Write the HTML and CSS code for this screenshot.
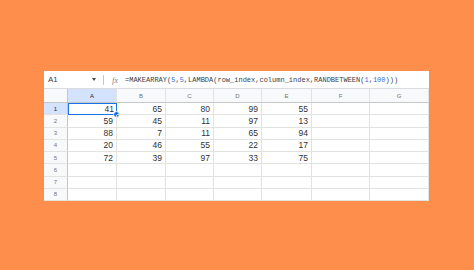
FILE: index.html
```html
<!DOCTYPE html>
<html>
<head>
<meta charset="utf-8">
<link rel="stylesheet" href="styles.css">
</head>
<body>
<div class="sheet">
  <div class="fbar">
    <div class="namebox"><span>A1</span><span class="caret"></span></div>
    <div class="divider"></div>
    <div class="fx">fx</div>
    <div class="formula">=MAKEARRAY(<span class="num">5</span>,<span class="num">5</span>,LAMBDA(row_index,column_index,RANDBETWEEN(<span class="num">1</span>,<span class="num">100</span>)))</div>
  </div>
  <div class="grid">
    <div class="corner"></div>
    <div class="colh sel">A</div><div class="colh">B</div><div class="colh">C</div><div class="colh">D</div><div class="colh">E</div><div class="colh">F</div><div class="colh">G</div>

    <div class="rowh sel">1</div>
    <div class="cell active">41<span class="handle"></span></div><div class="cell">65</div><div class="cell">80</div><div class="cell">99</div><div class="cell">55</div><div class="cell"></div><div class="cell"></div>

    <div class="rowh">2</div>
    <div class="cell">59</div><div class="cell">45</div><div class="cell">11</div><div class="cell">97</div><div class="cell">13</div><div class="cell"></div><div class="cell"></div>

    <div class="rowh">3</div>
    <div class="cell">88</div><div class="cell">7</div><div class="cell">11</div><div class="cell">65</div><div class="cell">94</div><div class="cell"></div><div class="cell"></div>

    <div class="rowh">4</div>
    <div class="cell">20</div><div class="cell">46</div><div class="cell">55</div><div class="cell">22</div><div class="cell">17</div><div class="cell"></div><div class="cell"></div>

    <div class="rowh">5</div>
    <div class="cell">72</div><div class="cell">39</div><div class="cell">97</div><div class="cell">33</div><div class="cell">75</div><div class="cell"></div><div class="cell"></div>

    <div class="rowh">6</div>
    <div class="cell"></div><div class="cell"></div><div class="cell"></div><div class="cell"></div><div class="cell"></div><div class="cell"></div><div class="cell"></div>

    <div class="rowh">7</div>
    <div class="cell"></div><div class="cell"></div><div class="cell"></div><div class="cell"></div><div class="cell"></div><div class="cell"></div><div class="cell"></div>

    <div class="rowh">8</div>
    <div class="cell"></div><div class="cell"></div><div class="cell"></div><div class="cell"></div><div class="cell"></div><div class="cell"></div><div class="cell"></div>
  </div>
</div>
</body>
</html>
```

FILE: styles.css
```css
html, body {
  margin: 0;
  padding: 0;
}
body {
  width: 474px;
  height: 270px;
  background: #fd8e4b;
  overflow: hidden;
  font-family: "Liberation Sans", Arial, sans-serif;
}
.sheet {
  margin: 71px 0 0 44px;
  width: 385px;
  height: 130px;
  background: #ffffff;
  display: flex;
  flex-direction: column;
}
.fbar {
  height: 18px;
  box-sizing: border-box;
  border-bottom: 1px solid #dadce0;
  display: flex;
  align-items: center;
  color: #3c4043;
}
.namebox {
  width: 58px;
  display: flex;
  align-items: center;
  justify-content: space-between;
  padding: 0 6px 0 4px;
  box-sizing: border-box;
  font-size: 8px;
}
.caret {
  width: 0;
  height: 0;
  border-left: 2.5px solid transparent;
  border-right: 2.5px solid transparent;
  border-top: 3px solid #444746;
}
.divider {
  width: 1px;
  height: 10px;
  background: #c4c7c5;
  margin-left: 1px;
}
.fx {
  font-family: "Liberation Serif", serif;
  font-style: italic;
  font-size: 8.5px;
  color: #80868b;
  margin-left: 8px;
  width: 13px;
}
.formula {
  font-family: "Liberation Mono", monospace;
  font-size: 7px;
  color: #3c4043;
  white-space: nowrap;
}
.num {
  color: #2f6ee0;
}
.grid {
  flex: 1;
  display: grid;
  grid-template-columns: 24px 49px 49px 48px 48px 50px 58px 1fr;
  grid-template-rows: 14px repeat(8, 1fr);
}
.grid > div {
  box-sizing: border-box;
}
.corner {
  background: #f8f9fa;
  border-right: 1px solid #c4c7c5;
  border-bottom: 1px solid #c4c7c5;
}
.colh {
  background: #f8f9fa;
  border-right: 1px solid #e1e3e1;
  border-bottom: 1px solid #c4c7c5;
  font-size: 6px;
  color: #6f7377;
  display: flex;
  align-items: center;
  justify-content: center;
}
.rowh {
  background: #f8f9fa;
  border-right: 1px solid #c4c7c5;
  border-bottom: 1px solid #e1e3e1;
  font-size: 6px;
  color: #6f7377;
  display: flex;
  align-items: center;
  justify-content: center;
}
.colh.sel, .rowh.sel {
  background: #d3e3fd;
  color: #1f1f1f;
}
.cell {
  position: relative;
  border-right: 1px solid #e1e3e1;
  border-bottom: 1px solid #e1e3e1;
  font-size: 8.5px;
  color: #303134;
  display: flex;
  align-items: center;
  justify-content: flex-end;
  padding-right: 3px;
}
.cell.active {
  border: 1.5px solid #1a73e8;
  padding-right: 2px;
}
.handle {
  position: absolute;
  right: -3.5px;
  bottom: -3.5px;
  width: 5px;
  height: 5px;
  border-radius: 50%;
  background: #1a73e8;
  border: 0.5px solid #ffffff;
}
```
